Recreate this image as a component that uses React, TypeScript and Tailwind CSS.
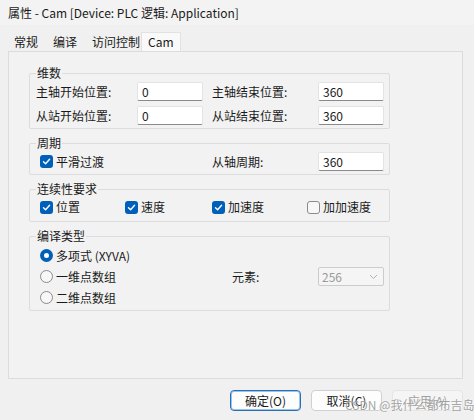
import type { ReactNode } from "react";

const font = { fontFamily: '"Noto Sans CJK SC", "Noto Sans", sans-serif' };

function TextBox({ value }: { value: string }) {
  return (
    <div className="w-[66px] h-[19px] bg-white border border-[#e3e3e3] border-b-[#8a8a8a] rounded-[2px] flex items-center pl-[4px] text-[12px] text-[#1a1a1a]">
      {value}
    </div>
  );
}

function CheckBox({ checked, label }: { checked: boolean; label: string }) {
  return (
    <div className="flex items-center gap-[3px] ml-[4px]">
      {checked ? (
        <span className="w-[13px] h-[13px] rounded-[3px] bg-[#005fb8] flex items-center justify-center">
          <svg width="9" height="9" viewBox="0 0 9 9" fill="none">
            <path d="M1.5 4.8 L3.6 6.8 L7.6 2.2" stroke="white" strokeWidth="1.4" strokeLinecap="round" strokeLinejoin="round" />
          </svg>
        </span>
      ) : (
        <span className="w-[13px] h-[13px] rounded-[3px] border border-[#8a8a8a] bg-[#f7f7f7]" />
      )}
      <span>{label}</span>
    </div>
  );
}

function Radio({ checked, label }: { checked: boolean; label: string }) {
  return (
    <div className="flex items-center gap-[3px] ml-[4px]">
      {checked ? (
        <span className="w-[13px] h-[13px] rounded-full bg-[#005fb8] flex items-center justify-center">
          <span className="w-[5px] h-[5px] rounded-full bg-white" />
        </span>
      ) : (
        <span className="w-[13px] h-[13px] rounded-full border border-[#8a8a8a] bg-[#f7f7f7]" />
      )}
      <span>{label}</span>
    </div>
  );
}

function Group({ title, className, children }: { title: string; className: string; children: ReactNode }) {
  return (
    <fieldset className={`w-[361px] border border-[#dcdcdc] rounded-[2px] pl-[6px] ${className}`}>
      <legend className="px-[1px] h-[18px] leading-[18px]">{title}</legend>
      {children}
    </fieldset>
  );
}

function Button({ label, primary, disabled }: { label: string; primary?: boolean; disabled?: boolean }) {
  const cls = disabled
    ? "border-[#e5e5e5] bg-[#f5f5f5] text-[#a0a0a0]"
    : primary
      ? "border-[#2a6fb5] bg-[#fdfdfd] text-[#1a1a1a] shadow-[inset_0_0_0_1px_#9cc3e8]"
      : "border-[#d0d0d0] bg-[#fdfdfd] text-[#1a1a1a]";
  return (
    <div className={`w-[71px] h-[21px] rounded-[4px] border flex items-center justify-center text-[12px] ${cls}`}>
      {label}
    </div>
  );
}

export default function App() {
  return (
    <div className="relative w-[474px] h-[420px] bg-[#f0f0f0] text-[12px] text-[#1a1a1a] overflow-hidden" style={font}>
      <div className="h-[25px] bg-[#f3f3f3] pl-[8px] flex items-center text-[12px] text-[#1a1a1a]">
        属性 - Cam [Device: PLC 逻辑: Application]
      </div>

      <div className="ml-[8px] mt-[7px] h-[19px] flex items-end">
        <div className="w-[39px] h-[19px] pl-[6px] flex items-center">常规</div>
        <div className="w-[39px] h-[19px] pl-[6px] flex items-center">编译</div>
        <div className="w-[55px] h-[19px] pl-[6px] flex items-center">访问控制</div>
        <div className="w-[40px] h-[19px] pl-[6px] flex items-center bg-[#f9f9f9] border border-b-0 border-[#e2e2e2]">Cam</div>
      </div>

      <div className="ml-[8px] w-[455px] h-[328px] border border-[#dcdcdc] bg-[#f2f2f2] pl-[20px] pt-[12px]">
        <Group title="维数" className="pb-[3px]">
          <div className="grid grid-cols-[101px_75px_106px_66px] gap-y-[5px] items-center">
            <span>主轴开始位置:</span>
            <TextBox value="0" />
            <span>主轴结束位置:</span>
            <TextBox value="360" />
            <span>从站开始位置:</span>
            <TextBox value="0" />
            <span>从站结束位置:</span>
            <TextBox value="360" />
          </div>
        </Group>

        <Group title="周期" className="mt-[5px] pb-[3px]">
          <div className="grid grid-cols-[176px_106px_66px] h-[19px] items-center">
            <CheckBox checked label="平滑过渡" />
            <span>从轴周期:</span>
            <TextBox value="360" />
          </div>
        </Group>

        <Group title="连续性要求" className="mt-[5px] pb-[5px]">
          <div className="grid grid-cols-[85px_87px_95px_auto] h-[18px] items-center">
            <CheckBox checked label="位置" />
            <CheckBox checked label="速度" />
            <CheckBox checked label="加速度" />
            <CheckBox checked={false} label="加加速度" />
          </div>
        </Group>

        <Group title="编译类型" className="mt-[5px] pb-[2px]">
          <div className="h-[21px] flex items-center">
            <Radio checked label="多项式 (XYVA)" />
          </div>
          <div className="h-[21px] grid grid-cols-[196px_86px_66px] items-center">
            <Radio checked={false} label="一维点数组" />
            <span>元素:</span>
            <div className="w-[66px] h-[19px] border border-[#cccccc] rounded-[2px] bg-[#f5f5f5] flex items-center justify-between pl-[3px] pr-[5px] text-[#9a9a9a]">
              <span>256</span>
              <svg width="9" height="6" viewBox="0 0 9 6" fill="none">
                <path d="M1 1 L4.5 4.5 L8 1" stroke="#b0b0b0" strokeWidth="1" />
              </svg>
            </div>
          </div>
          <div className="h-[21px] flex items-center">
            <Radio checked={false} label="二维点数组" />
          </div>
        </Group>
      </div>

      <div className="mt-[11px] pr-[11px] flex justify-end gap-[10px]">
        <Button label="确定(O)" primary />
        <Button label="取消(C)" />
        <Button label="应用(A)" disabled />
      </div>

      <div className="absolute left-[345px] top-[396px] whitespace-nowrap text-[12px] text-[#8c8c8c]/80 [text-shadow:0_0_2px_#ffffff]">
        CSDN @我什么都布吉岛
      </div>
    </div>
  );
}
